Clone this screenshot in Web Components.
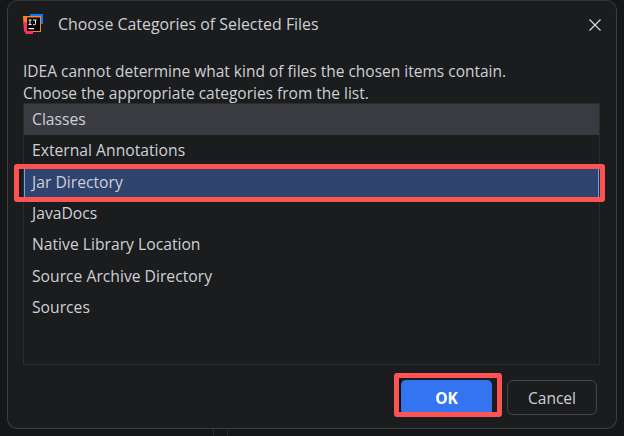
<!DOCTYPE html>
<html><head><meta charset="utf-8">
<style>
html,body{margin:0;padding:0;width:624px;height:436px;overflow:hidden;background:#151618;font-family:"Open Sans","Noto Sans",sans-serif;}
body{display:flex;flex-direction:column;align-items:flex-start}
</style></head><body>
<template id="t-dialog"><style>
:host{display:flex;flex-direction:column;box-sizing:border-box;width:610px;height:429px;margin-left:7px;margin-top:0;background:#1b1c1e;border:1px solid #3c3d40;border-top-color:#333437;border-radius:10px;padding:0 16px 0 15px;color:#ced0d6;font-size:15.5px;position:relative}
.title{display:flex;align-items:center;height:48px;flex:none;gap:15px}
.title svg.logo{flex:none;margin-top:-2px}
.t{flex:1;font-size:15.9px;color:#ced0d6;white-space:nowrap;margin-top:-2px}
.msg{margin-top:11px;line-height:22px;height:43px;white-space:nowrap;flex:none;color:#ced0d6}
.foot{display:flex;justify-content:flex-end;gap:15px;padding:15px 3px 0 0;flex:none}
.x{margin-right:-2px;flex:none;margin-top:-1px}
</style>
<div class="title"><svg class="logo" width="20" height="20" viewBox="0 0 20 20">
<path d="M7 0H20V10H7Z" fill="#087cfa"/><path d="M0 2H18V18H5L1 17Z" fill="#fd8224"/><path d="M1 8H10V20H3L1 17Z" fill="#fe315d"/>
<rect x="4" y="3.500" width="13" height="13.500" fill="#000"/><rect x="5.500" y="14" width="5.500" height="1.200" fill="#fff"/>
<path d="M5.500 6h3M7 6v4.500M5.500 10.500h3M10 6h3.500M12.500 6v3.700q0 1-1 1h-1.500" fill="none" stroke="#fff" stroke-width="1"/></svg>
<div class="t"><slot name="title"></slot></div>
<svg class="x" width="14" height="14" viewBox="0 0 14 14"><path d="M1.500 1.500L12.500 12.500M12.500 1.500L1.500 12.500" stroke="#dfe1e5" stroke-width="1.100" fill="none"/></svg></div>
<div class="msg"><slot name="msg"></slot></div>
<slot></slot>
<div class="foot"><slot name="foot"></slot></div>
</template>
<template id="t-list"><style>
:host{display:flex;flex-direction:column;box-sizing:border-box;height:262px;border:1px solid #2b2c2f;flex:none;font-size:15.7px}
</style><slot></slot></template>
<template id="t-item"><style>
:host{display:flex;align-items:center;box-sizing:border-box;height:31.300px;padding:0 0 1px 8px;position:relative;color:#ced0d6;white-space:nowrap;flex:none}
:host([state=hover]){background:#393b40}
:host([state=sel]){background:#2e436e;border:1px solid #6aa6e8;padding:0 0 0 7px}
.mark{display:none}
:host([marked]) .mark{display:block;position:absolute;left:-11px;right:-7px;top:-4px;bottom:-5px;border:5px solid #fd5353;border-radius:3px;box-sizing:border-box;pointer-events:none}
</style><slot></slot><div class="mark"></div></template>
<template id="t-btn"><style>
:host{display:flex;align-items:center;justify-content:center;box-sizing:border-box;width:90px;height:35px;border:1px solid #43454a;border-radius:6px;color:#ced0d6;font-size:15.5px;position:relative;flex:none}
:host([primary]){width:91px;background:#3574f0;border:0;color:#fff;font-weight:700;border-radius:5px}
.mark{display:none}
:host([marked]) .mark{display:block;position:absolute;left:-7px;right:-10px;top:-7px;bottom:-2px;border:5px solid #fd5353;border-radius:3px;box-sizing:border-box;}
.gap{display:none}
:host([marked]) .gap{display:block;position:absolute;left:-2px;width:2px;top:-1px;height:33px;background:#111}
</style><span><slot></slot></span><div class="gap"></div><div class="mark"></div></template>
<template id="t-rail"><style>
:host{display:flex;gap:13px;height:7px;margin-left:213px;flex:none}
i{display:block;width:1px;background:#2a2b2e}
</style><i></i><i></i></template>
<ij-dialog>
<span slot="title">Choose Categories of Selected Files</span>
<span slot="msg">IDEA cannot determine what kind of files the chosen items contain.<br>Choose the appropriate categories from the list.</span>
<ij-list>
<ij-item state="hover">Classes</ij-item>
<ij-item>External Annotations</ij-item>
<ij-item state="sel" marked>Jar Directory</ij-item>
<ij-item>JavaDocs</ij-item>
<ij-item>Native Library Location</ij-item>
<ij-item>Source Archive Directory</ij-item>
<ij-item>Sources</ij-item>
</ij-list>
<ij-btn slot="foot" primary marked>OK</ij-btn>
<ij-btn slot="foot">Cancel</ij-btn>
</ij-dialog>
<ij-rail></ij-rail>
<script>
for(const [tag,id] of [['ij-dialog','t-dialog'],['ij-list','t-list'],['ij-item','t-item'],['ij-btn','t-btn'],['ij-rail','t-rail']]){
customElements.define(tag,class extends HTMLElement{constructor(){super();this.attachShadow({mode:'open'}).appendChild(document.getElementById(id).content.cloneNode(true));}});
}
</script>
</body></html>
